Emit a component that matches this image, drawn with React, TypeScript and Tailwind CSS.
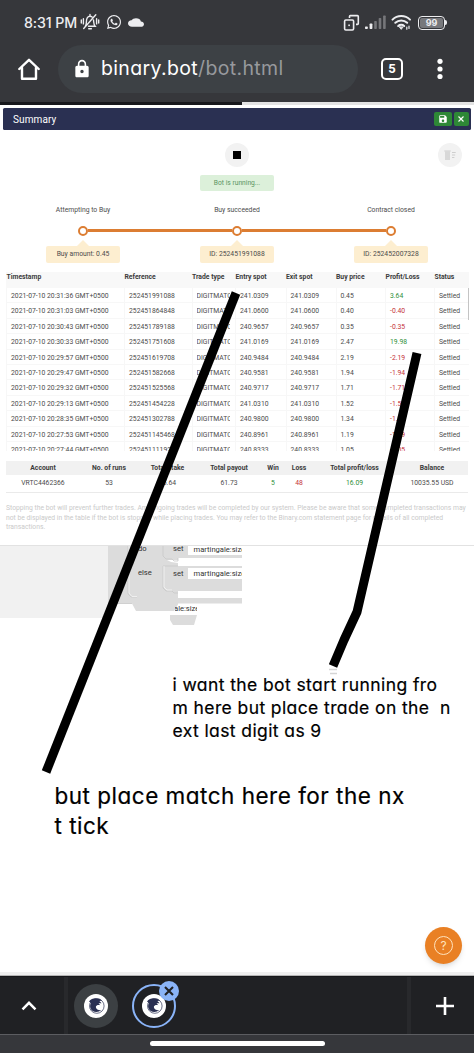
import { FaWhatsapp } from 'react-icons/fa';
import { MdCloud, MdLock, MdSave } from 'react-icons/md';

const trades = [
  ['2021-07-10 20:31:36', '252451991088', '241.0309', '0.45', '3.64'],
  ['2021-07-10 20:31:03', '252451864848', '241.0600', '0.40', '-0.40'],
  ['2021-07-10 20:30:43', '252451789188', '240.9657', '0.35', '-0.35'],
  ['2021-07-10 20:30:33', '252451751608', '241.0169', '2.47', '19.98'],
  ['2021-07-10 20:29:57', '252451619708', '240.9484', '2.19', '-2.19'],
  ['2021-07-10 20:29:47', '252451582668', '240.9581', '1.94', '-1.94'],
  ['2021-07-10 20:29:32', '252451525568', '240.9717', '1.71', '-1.71'],
  ['2021-07-10 20:29:13', '252451454228', '241.0310', '1.52', '-1.52'],
  ['2021-07-10 20:28:35', '252451302788', '240.9800', '1.34', '-1.34'],
  ['2021-07-10 20:27:53', '252451145468', '240.8961', '1.19', '-1.19'],
  ['2021-07-10 20:27:44', '252451111928', '240.8333', '1.05', '-1.05'],
]

const headers = ['Timestamp', 'Reference', 'Trade type', 'Entry spot', 'Exit spot', 'Buy price', 'Profit/Loss', 'Status']

const totals = [
  { label: 'Account', value: 'VRTC4462366', color: '' },
  { label: 'No. of runs', value: '53', color: '' },
  { label: 'Total stake', value: '45.64', color: '' },
  { label: 'Total payout', value: '61.73', color: '' },
  { label: 'Win', value: '5', color: 'text-[#2f8f3a]' },
  { label: 'Loss', value: '48', color: 'text-[#c5333a]' },
  { label: 'Total profit/loss', value: '16.09', color: 'text-[#2f8f3a]' },
  { label: 'Balance', value: '10035.55 USD', color: '' },
]

const stages = [
  { title: 'Attempting to Buy', note: 'Buy amount: 0.45' },
  { title: 'Buy succeeded', note: 'ID: 252451991088' },
  { title: 'Contract closed', note: 'ID: 252452007328' },
]

const cols = 'grid grid-cols-[118px_67.5px_43.5px_50.5px_50px_49.5px_49px_33px]'

const StatusBar = () => {
  return (
    <div className="flex h-[45px] items-center justify-between pl-6 pr-[27px] text-[#ededf0]">
      <div className="flex items-center">
        <span className="w-[56px] whitespace-nowrap text-[14.2px] font-medium tracking-[-0.1px]">8:31 PM</span>
        <svg className="-mt-px" width="20" height="18" viewBox="0 0 20 18" fill="none" stroke="currentColor" strokeWidth="1.4" strokeLinecap="round">
          <path d="M1.3 7v3M3.4 5.7v5.2M16.6 5.7v5.2M18.7 7v3M5.3 13.2c1-1 1.1-2 1.1-4.4C6.4 5 7.8 3.3 10 3.3c.8 0 1.4.2 2 .6M13.5 7c.3 3 .1 4.6 1.6 6.2H8.5M8.7 15.8h2.7M3.7 15.5 15.8 1.7M10 1.5v1.4" />
        </svg>
        <FaWhatsapp className="ml-[6px] size-[16px]" />
        <MdCloud className="ml-[6px] h-[13px] w-[16px]" preserveAspectRatio="none" />
      </div>
      <div className="flex items-center">
        <svg className="-ml-[3px] mr-[3px]" width="17" height="18" viewBox="0 0 17 18" fill="none" stroke="currentColor" strokeWidth="1.6">
          <rect x="1.6" y="6" width="9" height="10" rx="1.2" />
          <path d="M6.5 4V2.4q0-.8.8-.8h7.2q.8 0 .8.8v7.2q0 .8-.8.8H13" />
          <rect x="5.3" y="10.5" width="1.6" height="1.6" fill="currentColor" stroke="none" />
        </svg>
        <svg className="ml-[2px] mr-[2px]" width="21" height="15" viewBox="0 0 21 15" fill="currentColor">
          <rect x="0" y="11.5" width="2.8" height="2.5" rx=".7" />
          <rect x="4.6" y="8.5" width="2.8" height="5.5" rx=".7" />
          <g opacity=".35">
            <rect x="9.2" y="6" width="2.6" height="8" rx=".7" />
            <rect x="13.7" y="3" width="2.6" height="11" rx=".7" />
            <rect x="18.1" y="0.5" width="2.6" height="13.5" rx=".7" />
          </g>
        </svg>
        <svg className="ml-[3px] mr-[1px]" width="21" height="17" viewBox="0 0 21 17" fill="none" stroke="currentColor" strokeWidth="2" strokeLinecap="round">
          <path d="M1.5 5.6a12.5 12.5 0 0 1 17.5 0M4.3 8.8a8.7 8.7 0 0 1 11.9 0M7.2 12a4.4 4.4 0 0 1 6 0" />
          <path d="m8.3 13 1.9 2.4 1.7-2.2z" fill="currentColor" strokeWidth=".8" />
          <path d="M15.8 13v2.2M18 12.2v2.2" strokeWidth="1.2" />
        </svg>
        <div className="ml-[5px] flex h-[14px] w-[27px] items-center justify-center rounded-[4px] border-[1.5px] border-[#ededf0] p-px">
          <span className="flex h-full w-full items-center justify-center rounded-[2px] bg-[#77787c] text-[9px] font-bold">99</span>
        </div>
        <span className="h-[5px] w-[2px] rounded-r bg-[#ededf0]" />
      </div>
    </div>
  )
}

const Toolbar = () => {
  return (
    <div className="flex h-[57px] pl-[18px] text-white">
      <svg className="mt-[13px]" width="22" height="23" viewBox="0 0 22 23" fill="none" stroke="currentColor" strokeWidth="2.4" strokeLinejoin="round" strokeLinecap="round">
        <path d="M1.3 11 11 1.8 20.7 11M4 9.6v11.2h14V9.6" />
      </svg>
      <div className="ml-[18px] flex h-12 w-[300px] items-center rounded-full bg-[#3d4145]">
        <MdLock className="ml-[14px] size-[20px]" />
        <span className="ml-[9px] whitespace-nowrap text-[19.5px] tracking-[0.35px]">
          binary.bot<span className="text-[#97999d]">/bot.html</span>
        </span>
      </div>
      <div className="ml-[23px] mt-[13px] flex h-[22px] w-[22px] items-center justify-center rounded-[5px] border-[2.3px] border-white font-[Roboto] text-[13px] font-bold">5</div>
      <svg className="ml-[34px] mt-[13px]" width="6" height="22" viewBox="0 0 6 22" fill="currentColor">
        <circle cx="3" cy="3.3" r="2.6" />
        <circle cx="3" cy="11" r="2.6" />
        <circle cx="3" cy="18.5" r="2.6" />
      </svg>
    </div>
  )
}

const Progress = () => {
  return (
    <div className="h-[142px] px-[3px]">
      <div className="grid h-[50px] grid-cols-3 items-center">
        <span />
        <div className="flex size-6 items-center justify-center justify-self-center rounded-full bg-[#f2f2f2]">
          <div className="size-[7.5px] bg-black" />
        </div>
        <div className="mr-[9px] flex size-6 items-center justify-center justify-self-end rounded-full bg-[#f2f2f2]">
          <svg width="12" height="11" viewBox="0 0 12 11" stroke="#cecece">
            <rect x="1" y="1.5" width="5" height="8.5" fill="#d8d8d8" stroke="none" />
            <path d="M.3 1h6.4M8 2.5h3.7M8 5h3.2M8 7.5h2.4" />
          </svg>
        </div>
      </div>
      <div className="mx-auto -mt-[5px] flex h-[16px] w-[74px] items-center justify-center rounded-[2px] bg-[#dcf0da] pt-px text-[6.7px] text-[#5b9663]">Bot is running...</div>
      <div className="mx-[3px] grid grid-cols-3 pt-[14px] text-[6.8px] text-[#4c4c4c]">
        {stages.map((s, i) => (
          <div key={s.title} className="flex flex-col items-center">
            <span className="h-[10px] leading-[11px]">{s.title}</span>
            <div className="mt-[10px] flex h-[11px] w-full items-center">
              <div className={i === 0 ? 'h-[2.5px] flex-1' : 'h-[2.5px] flex-1 bg-[#dc7d32]'} />
              <div className="size-[10px] rounded-full border-2 border-[#dc7d32] bg-white" />
              <div className={i === 2 ? 'h-[2.5px] flex-1' : 'h-[2.5px] flex-1 bg-[#dc7d32]'} />
            </div>
            <svg className="mt-[4px]" width="12" height="6" viewBox="0 0 12 6" fill="#fdeed0">
              <path d="M6 0l6 6H0z" />
            </svg>
            <span className="flex h-[16.5px] w-[74px] items-center justify-center whitespace-nowrap rounded-[2px] bg-[#fdeed0]">{s.note}</span>
          </div>
        ))}
      </div>
    </div>
  )
}

const TradeTable = () => {
  return (
    <div className="relative ml-[6px] w-[463px] text-[6.8px]">
      <div className={`${cols} h-[16px] bg-[#f8f8f8] pt-px font-bold leading-[9px] text-[#3b3b3b]`}>
        {headers.map((h) => (
          <span key={h} className="whitespace-nowrap pl-[0.5px]">{h}</span>
        ))}
      </div>
      <div className="h-[163px] overflow-hidden text-[#4c4c4c]">
        {trades.map(([time, ref, spot, price, profit]) => (
          <div key={ref} className={`${cols} h-[15.4px] border-b border-[#f7f7f7] leading-[16.5px] *:whitespace-nowrap *:border-l *:border-[#f7f7f7] *:pl-1`}>
            <span>{time} GMT+0500</span>
            <span>{ref}</span>
            <span><span className="block w-[33.5px] overflow-hidden">DIGITMATCH</span></span>
            <span>{spot}</span>
            <span>{spot}</span>
            <span>{price}</span>
            <span className={profit.startsWith('-') ? 'text-[#c5333a]' : 'text-[#2f8f3a]'}>{profit}</span>
            <span>Settled</span>
          </div>
        ))}
      </div>
      <div className="absolute right-0 top-4 h-8 w-[1.5px] bg-[#c4c4c4]" />
    </div>
  )
}

const TotalsTable = () => {
  return (
    <div className="ml-[6px] mt-[10px] grid h-[32px] w-[462px] grid-cols-[74px_58px_59px_64px_24px_28px_83px_72px] border-b border-[#eaeaea] text-center text-[6.8px] text-[#4c4c4c]">
      {totals.map((t) => (
        <div key={t.label} className="whitespace-nowrap">
          <div className="h-[14px] bg-[#f1f1f1] font-bold leading-[14px] text-[#3b3b3b]">{t.label}</div>
          <div className={`h-[17px] leading-[17px] ${t.color}`}>{t.value}</div>
        </div>
      ))}
    </div>
  )
}

// leftovers of the block workspace under the dialog
const Workspace = () => {
  return (
    <svg className="block" width="242" height="82" viewBox="0 0 242 82" fontFamily="Roboto, sans-serif" fontSize="7.6" fill="#333">
      <rect width="108" height="72" fill="#f1f1f1" />
      <path d="M108 0H242V57.5H178V58.5L174 65H136L132 57.5H108z" fill="#dcdcdc" />
      <path d="M178 12H242V20H178V17L171 16 167 14H178zM178 45H242V52H178zM188 0H242V9H188zM188 22H242V33H188z" fill="#fff" />
      <path d="M163 0V10L166 13H172L174 15H178V12M178 20H163V42L166 45H172L174 47H178M128 0V48L131 51H137M108 57.5H132" fill="none" stroke="#c8c8c8" strokeWidth=".8" />
      <path d="M129 0V47L132 50.5H137M164 20V41L167 44H172" fill="none" stroke="#f2f2f2" strokeWidth=".9" />
      <path d="M170 69H197L194 79H173L170 74z" fill="#dcdcdc" />
      <text x="138" y="5">do</text>
      <text x="173" y="5">set</text>
      <text x="193.5" y="5.5">martingale:size</text>
      <text x="138" y="29">else</text>
      <text x="173" y="30">set</text>
      <text x="193.5" y="30">martingale:size</text>
      <svg x="175" y="57" width="22" height="11">
        <text x="-1" y="8">ale:size</text>
      </svg>
    </svg>
  )
}

const TabIcon = () => {
  return (
    <svg width="24" height="24" viewBox="0 0 24 24">
      <circle cx="12" cy="12" r="12" fill="#fff" />
      <circle cx="12.8" cy="12" r="7.3" fill="none" stroke="#2a3052" strokeWidth=".7" />
      <path d="M5 7.5C8 3.5 14 3.4 18 6.6l-2.6.5 2.2 2.1-3.1.1 1.8 2c-3.6-.8-5.3 1.2-3.9 3.3 1 1.5 3 1.8 4.8 1.5-3.2 3.2-9.4 2.4-10.8-2.2-.5-1.6-.3-3.4.5-4.9z" fill="#2a3052" />
    </svg>
  )
}

const BottomBar = () => {
  return (
    <div className="h-[77px] bg-[#36373b]">
      <div className="flex h-[58px] border-t border-[#16171a] bg-[#202124] text-white">
        <div className="flex w-[68px] items-center border-r-4 border-[#28292c] pl-[21px]">
          <svg width="16" height="11" viewBox="0 0 16 11" fill="none" stroke="currentColor" strokeWidth="2.5">
            <path d="M1.5 9.3 8 2.8l6.5 6.5" />
          </svg>
        </div>
        <div className="flex flex-1 items-center pl-[6px]">
          <div className="flex size-[44px] items-center justify-center rounded-full bg-[#3c4043]"><TabIcon /></div>
          <div className="relative ml-[14px] flex size-[44px] items-center justify-center rounded-full border-[2.5px] border-[#8ab4f8]">
            <TabIcon />
            <svg className="absolute -right-[5px] -top-[5px]" width="20" height="20" viewBox="0 0 20 20">
              <circle cx="10" cy="10" r="10" fill="#8ab4f8" />
              <path d="m6 6 8 8m0-8-8 8" stroke="#202124" strokeWidth="2.1" />
            </svg>
          </div>
        </div>
        <div className="flex w-[67px] items-center border-l-4 border-[#28292c] pl-[25px]">
          <svg width="18" height="18" viewBox="0 0 18 18" stroke="currentColor" strokeWidth="2.6">
            <path d="M9 0v18M0 9h18" />
          </svg>
        </div>
      </div>
      <div className="flex h-[19px] justify-center border-t border-[#5c5d61] pt-[6px]">
        <div className="h-[5px] w-[175px] rounded-full bg-white" />
      </div>
    </div>
  )
}

const App = () => {
  return (
    <div className="relative flex h-[1053px] w-[474px] flex-col overflow-hidden bg-white font-[Inter,sans-serif] [font-feature-settings:'cv11']">
      <div className="h-[102px] bg-[#36373b]">
        <StatusBar />
        <Toolbar />
      </div>
      <div className="flex h-[6px] bg-white">
        <div className="h-[3px] w-[242px] bg-[#17181c]" />
        <div className="h-[3px] flex-1 bg-[#e3e3e3]" />
      </div>

      <div className="h-[438px] shrink-0 border-b border-[#e2e2e2] font-[Roboto,sans-serif]">
        <div className="mx-[3px] flex h-[22px] items-center rounded-[1.5px] bg-[#2a3052] pl-[10px] pr-[2.5px] text-white">
          <span className="text-[10px] tracking-[0.1px]">Summary</span>
          <span className="ml-auto flex h-[14px] w-[18px] items-center justify-center rounded-[2px] bg-[#2e8836]"><MdSave className="size-[10px]" /></span>
          <span className="ml-[2px] flex h-[14px] w-[15px] items-center justify-center rounded-[2px] bg-[#2e8836]">
            <svg width="6" height="6" viewBox="0 0 6 6" stroke="currentColor" strokeWidth="1.1"><path d="m.5.5 5 5m0-5-5 5" /></svg>
          </span>
        </div>
        <Progress />
        <TradeTable />
        <TotalsTable />
        <p className="ml-[6px] mt-[11px] whitespace-nowrap text-[6.78px] leading-[9.5px] text-[#cacaca]">
          Stopping the bot will prevent further trades. Any ongoing trades will be completed by our system. Please be aware that some completed transactions may<br />
          not be displayed in the table if the bot is stopped while placing trades. You may refer to the Binary.com statement page for details of all completed<br />
          transactions.
        </p>
      </div>
      <Workspace />

      <p className="ml-[172.5px] mt-[44.5px] whitespace-pre text-[17.5px] leading-[23.3px] tracking-[0.4px] text-black [-webkit-text-stroke:0.2px_black]">{'i want the bot start running fro\nm here but place trade on the  n\next last digit as 9'}</p>
      <p className="ml-[54.5px] mt-[38.5px] whitespace-pre text-[22.5px] leading-[29.7px] tracking-[0.5px] text-black [-webkit-text-stroke:0.2px_black]">{'but place match here for the nx\nt tick'}</p>

      <div className="mt-auto h-1 border-b border-[#b5b5b5] bg-[#efefef]" />
      <BottomBar />

      <div className="absolute bottom-[89px] right-[12px] flex size-[37px] items-center justify-center rounded-full bg-[#e98024] shadow-md">
        <div className="flex size-[19px] items-center justify-center rounded-full border-[1.3px] border-[#ffe3bd] text-[12px] text-[#ffe3bd]">?</div>
      </div>

      {/* marker strokes */}
      <svg className="pointer-events-none absolute left-0 top-0" width="474" height="1053" viewBox="0 0 474 1053" fill="none" stroke="#000" strokeWidth="9">
        <path d="M236 293 46 772" />
        <path d="M417 353 357 612 344 640 333 666" strokeLinejoin="round" />
        <path d="M329 669.5h8M330 673.5h7" stroke="#d5d5d5" strokeWidth="1.5" />
      </svg>
    </div>
  )
}

export default App
